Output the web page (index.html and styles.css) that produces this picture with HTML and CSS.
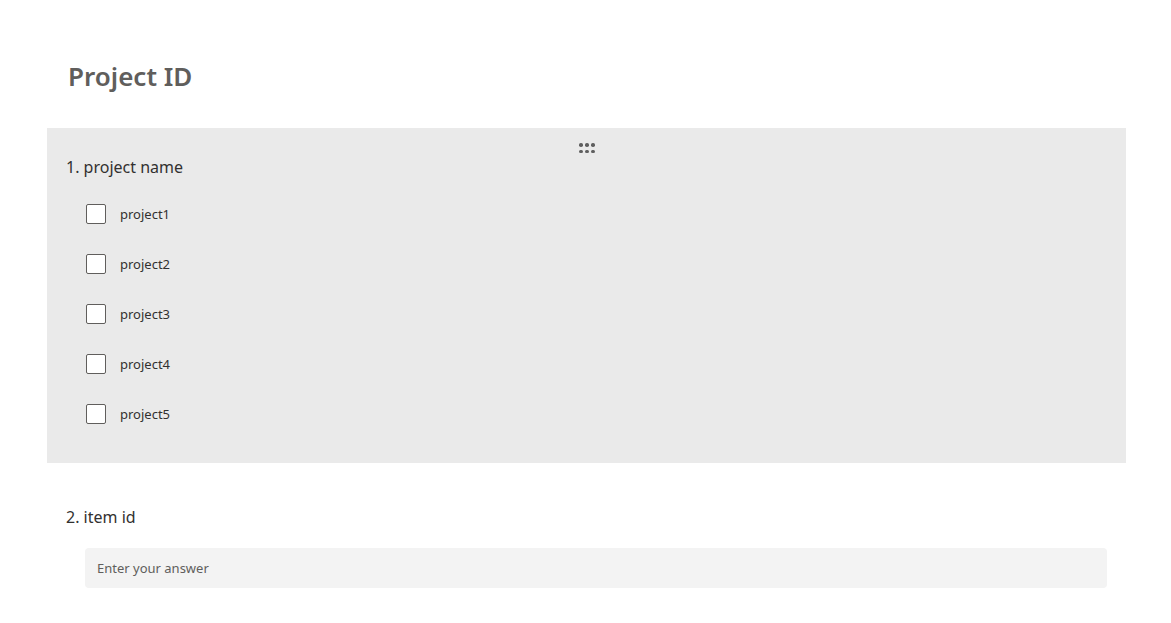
FILE: index.html
```html
<!DOCTYPE html>
<html lang="en">

<head>
    <meta charset="UTF-8" />
    <meta name="viewport" content="width=device-width,initial-scale=1.0" />
    <title>Project ID</title>
    <link rel="stylesheet" href="styles.css">
</head>

<body>
    <div class="form">
        <h1 class="form-title">Project ID</h1>

        <div class="question selected">
            <div class="drag-handle">
                <span></span><span></span><span></span>
                <span></span><span></span><span></span>
            </div>
            <div class="question-title">1. project name</div>
            <div class="options">
                <label class="option"><span class="box"></span>project1</label>
                <label class="option"><span class="box"></span>project2</label>
                <label class="option"><span class="box"></span>project3</label>
                <label class="option"><span class="box"></span>project4</label>
                <label class="option"><span class="box"></span>project5</label>
            </div>
        </div>

        <div class="question">
            <div class="question-title">2. item id</div>
            <div class="answer">Enter your answer</div>
        </div>
    </div>
</body>

</html>
```

FILE: styles.css
```css
* {
    margin: 0;
    padding: 0;
    box-sizing: border-box;
}

body {
    background: #ffffff;
    font-family: "Noto Sans", "Open Sans", sans-serif;
    color: #323130;
    width: 1171px;
    height: 623px;
    overflow: hidden;
}

.form {
    padding: 57px 45px 0 47px;
}

.form-title {
    font-size: 26px;
    font-weight: 600;
    color: #605e5c;
    padding-left: 21px;
    line-height: 38px;
    margin-bottom: 33px;
}

.question {
    position: relative;
    padding: 39px 19px 30px 19px;
}

.question.selected {
    background: #eaeaea;
    padding-top: 24px;
    padding-bottom: 24px;
}

.drag-handle {
    position: absolute;
    top: 15px;
    left: 532px;
    display: grid;
    grid-template-columns: repeat(3, 3.5px);
    gap: 3px 2.5px;
}

.drag-handle span {
    width: 3.5px;
    height: 3.5px;
    border-radius: 50%;
    background: #5f5f5f;
}

.question-title {
    font-size: 16px;
    line-height: 30px;
    padding-bottom: 7px;
}

.options {
    display: flex;
    flex-direction: column;
    padding-left: 20px;
}

.option {
    display: flex;
    align-items: center;
    gap: 14px;
    height: 50px;
    font-size: 13px;
    color: #323130;
}

.box {
    width: 20px;
    height: 20px;
    background: #ffffff;
    border: 1px solid #605e5c;
    border-radius: 2px;
}

.answer {
    margin: 9px 0 0 19px;
    height: 40px;
    background: #f3f3f3;
    border-radius: 4px;
    font-size: 13px;
    line-height: 40px;
    padding-left: 12px;
    color: #605e5c;
}
```
